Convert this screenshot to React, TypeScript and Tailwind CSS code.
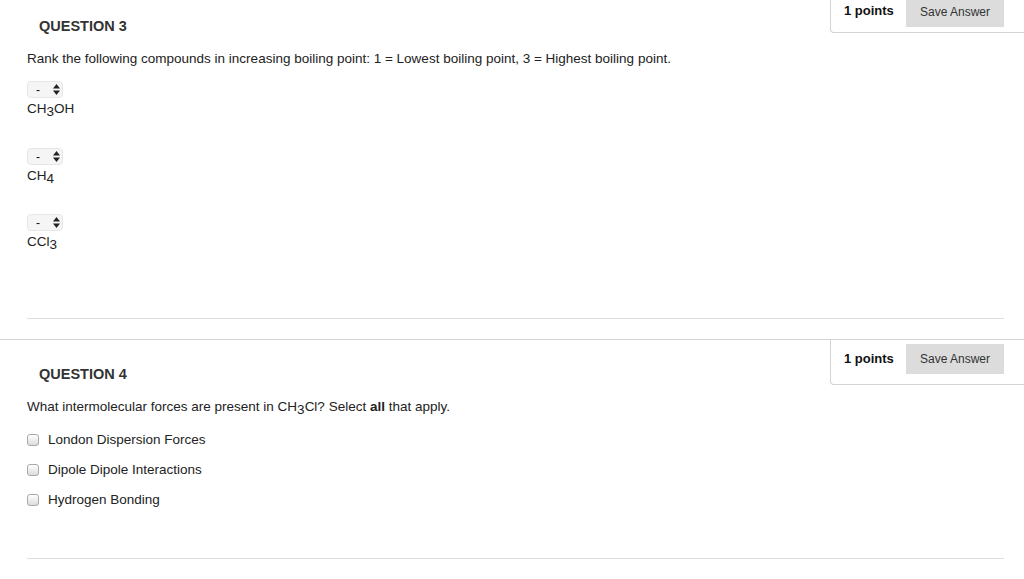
import React from "react";

function Select() {
  return (
    <div className="flex h-[17px] w-[36px] items-center rounded-[4px] border border-[#e6e6e6] bg-[#f5f5f5] pl-[8px] text-[12px] leading-none text-[#111]">
      <span className="w-[17px]">-</span>
      <svg width="7" height="11" viewBox="0 0 7 11">
        <path d="M3.5 0 L7 4.5 L0 4.5 Z" fill="#222" />
        <path d="M0 6.5 L7 6.5 L3.5 11 Z" fill="#222" />
      </svg>
    </div>
  );
}

function PointsBox({ top }: { top: boolean }) {
  return (
    <div
      className={
        top
          ? "flex h-[33px] w-[194px] items-start rounded-bl-[4px] border-b border-l border-[#d4d4d4] pl-[13px] pr-[20px]"
          : "flex h-[45px] w-[194px] items-start rounded-bl-[4px] border-b border-l border-[#d4d4d4] pl-[13px] pr-[20px] pt-[4px]"
      }
    >
      <span
        className={
          top
            ? "mt-[2px] text-[13px] font-bold leading-[18px] text-[#111]"
            : "text-[13px] font-bold leading-[30px] text-[#111]"
        }
      >
        1 points
      </span>
      <div
        className={
          top
            ? "ml-auto flex h-[27px] w-[98px] items-center justify-center bg-[#dcdcdc] pb-[6px] pt-0 text-[12px] text-[#333]"
            : "ml-auto flex h-[30px] w-[98px] items-center justify-center bg-[#dcdcdc] text-[12px] text-[#333]"
        }
      >
        <span className={top ? "mt-[2px]" : ""}>Save Answer</span>
      </div>
    </div>
  );
}

function Checkbox({ label }: { label: string }) {
  return (
    <div className="flex h-[30px] items-center pl-[27px]">
      <div className="h-[12px] w-[12px] rounded-[3px] border border-[#a9a9a9] bg-gradient-to-b from-[#ffffff] to-[#dcdcdc]" />
      <span className="ml-[9px] text-[13.5px] leading-[18px] text-[#222]">{label}</span>
    </div>
  );
}

export default function App() {
  return (
    <div
      className="h-[579px] w-[1024px] overflow-hidden bg-white text-[#222]"
      style={{ fontFamily: '"Liberation Sans", Arial, Helvetica, sans-serif' }}
    >
      {/* Question 3 */}
      <div className="flex justify-between">
        <div className="pl-[39px] pt-[16px] text-[14.5px] font-bold leading-5 text-[#333]">QUESTION 3</div>
        <PointsBox top={true} />
      </div>
      <p className="mt-[14px] pl-[27px] text-[13.5px] leading-[18px]">
        Rank the following compounds in increasing boiling point: 1 = Lowest boiling point, 3 = Highest boiling point.
      </p>
      <div className="pl-[27px]">
        <div className="mt-[13px]">
          <Select />
        </div>
        <div className="mt-[2px] text-[13.5px] leading-[18px]">
          CH<span className="relative top-[3px]">3</span>OH
        </div>
        <div className="mt-[30px]">
          <Select />
        </div>
        <div className="mt-[2px] text-[13.5px] leading-[18px]">
          CH<span className="relative top-[3px]">4</span>
        </div>
        <div className="mt-[29px]">
          <Select />
        </div>
        <div className="mt-[2px] text-[13.5px] leading-[18px]">
          CCl<span className="relative top-[3px]">3</span>
        </div>
      </div>
      <div className="ml-[27px] mr-[20px] mt-[67px] h-px bg-[#dedede]" />

      {/* Question 4 */}
      <div className="mt-[20px] border-t border-[#d4d4d4]">
        <div className="flex justify-between">
          <div className="pl-[39px] pt-[24px] text-[14.5px] font-bold leading-5 text-[#333]">QUESTION 4</div>
          <PointsBox top={false} />
        </div>
        <p className="mt-[13px] pl-[27px] text-[13.5px] leading-[18px]">
          What intermolecular forces are present in CH<span className="relative top-[3px]">3</span>Cl? Select{" "}
          <span className="font-bold">all</span> that apply.
        </p>
        <div className="mt-[9px]">
          <Checkbox label="London Dispersion Forces" />
          <Checkbox label="Dipole Dipole Interactions" />
          <Checkbox label="Hydrogen Bonding" />
        </div>
        <div className="ml-[27px] mr-[20px] mt-[43px] h-px bg-[#dedede]" />
      </div>
    </div>
  );
}
